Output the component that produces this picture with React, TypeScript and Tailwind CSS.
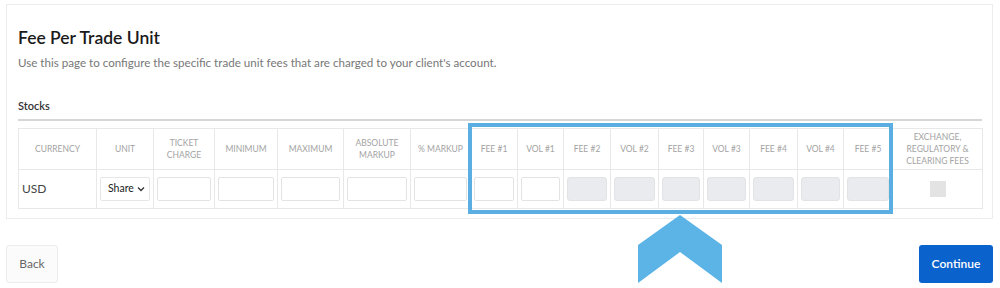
import React from "react";

const cols = [78, 57, 61, 63, 66, 67, 60, 47, 46, 47, 48, 45, 46, 48, 46, 49, 90];
const headers = [
  "CURRENCY",
  "UNIT",
  "TICKET CHARGE",
  "MINIMUM",
  "MAXIMUM",
  "ABSOLUTE MARKUP",
  "% MARKUP",
  "FEE #1",
  "VOL #1",
  "FEE #2",
  "VOL #2",
  "FEE #3",
  "VOL #3",
  "FEE #4",
  "VOL #4",
  "FEE #5",
  "EXCHANGE, REGULATORY & CLEARING FEES",
];

function Input({ disabled }: { disabled?: boolean }) {
  return (
    <div
      className={
        disabled
          ? "h-[24px] w-full rounded-[3px] border border-[#e1e3e6] bg-[#e9ebee]"
          : "h-[24px] w-full rounded-[2px] border border-[#e3e3e3] bg-white"
      }
    />
  );
}

export default function App() {
  return (
    <div
      className="relative w-[1000px] h-[288px] bg-white overflow-hidden"
      style={{ fontFamily: "Lato, 'Open Sans', Arial, sans-serif" }}
    >
      <div className="ml-[6px] mt-[4px] w-[987px] h-[215px] border border-[#ededed] pl-[11px] pr-[10px] pt-[22px]">
        <h1 className="text-[17.5px] leading-[22px] font-semibold text-[#1a1a1a]">Fee Per Trade Unit</h1>
        <p className="mt-[7px] text-[11.6px] leading-[14px] text-[#777]">
          Use this page to configure the specific trade unit fees that are charged to your client's account.
        </p>
        <div className="mt-[29px] text-[11px] leading-[14px] font-semibold text-[#333]">Stocks</div>
        <div className="mt-[6px] h-[2px] w-[964px] bg-[#d6d6d6]" />
        <div className="relative mt-[7px] w-[964px]">
          <table className="table-fixed border-collapse w-[964px]">
            <colgroup>
              {cols.map((w, i) => (
                <col key={i} style={{ width: w }} />
              ))}
            </colgroup>
            <thead>
              <tr className="h-[41px]">
                {headers.map((h, i) => (
                  <th
                    key={i}
                    className="border border-[#e8e8e8] px-[4px] text-center align-middle text-[8.5px] leading-[12px] font-normal text-[#a3a3a3]"
                  >
                    {h}
                  </th>
                ))}
              </tr>
            </thead>
            <tbody>
              <tr className="h-[39px]">
                <td className="border border-[#e8e8e8] pl-[3px] text-[12px] text-[#444]">USD</td>
                <td className="border border-[#e8e8e8] px-[3px]">
                  <div className="flex h-[24px] items-center justify-between rounded-[2px] border border-[#e6e6e6] bg-white pl-[7px] pr-[4px] text-[10.5px] text-[#222]">
                    <span>Share</span>
                    <svg width="8" height="6" viewBox="0 0 8 6">
                      <path d="M1 1.5 L4 4.5 L7 1.5" fill="none" stroke="#333" strokeWidth="1.3" />
                    </svg>
                  </div>
                </td>
                {cols.slice(2, 16).map((_, i) => (
                  <td key={i} className="border border-[#e8e8e8] px-[3px]">
                    <Input disabled={i >= 7} />
                  </td>
                ))}
                <td className="border border-[#e8e8e8]">
                  <div className="mx-auto h-[16px] w-[16px] bg-[#e3e3e3]" />
                </td>
              </tr>
            </tbody>
          </table>
          <div className="absolute left-[450px] top-[-5px] h-[91px] w-[425px] border-[4px] border-[#5aaee2]" />
        </div>
      </div>

      <div className="mt-[26px] flex items-center justify-between pl-[6px] pr-[7px]">
        <button className="h-[38px] w-[52px] rounded-[3px] border border-[#ececec] bg-[#fbfbfb] text-[12px] text-[#666]">
          Back
        </button>
        <button className="h-[38px] w-[74px] rounded-[3px] bg-[#0a62cc] text-[12px] font-semibold text-white">
          Continue
        </button>
      </div>

      <svg className="absolute left-[638px] top-[215px]" width="84" height="68" viewBox="0 0 84 68">
        <polygon points="0,30 42,0 84,30 84,68 42,37 0,68" fill="#5bb3e6" />
      </svg>
    </div>
  );
}
